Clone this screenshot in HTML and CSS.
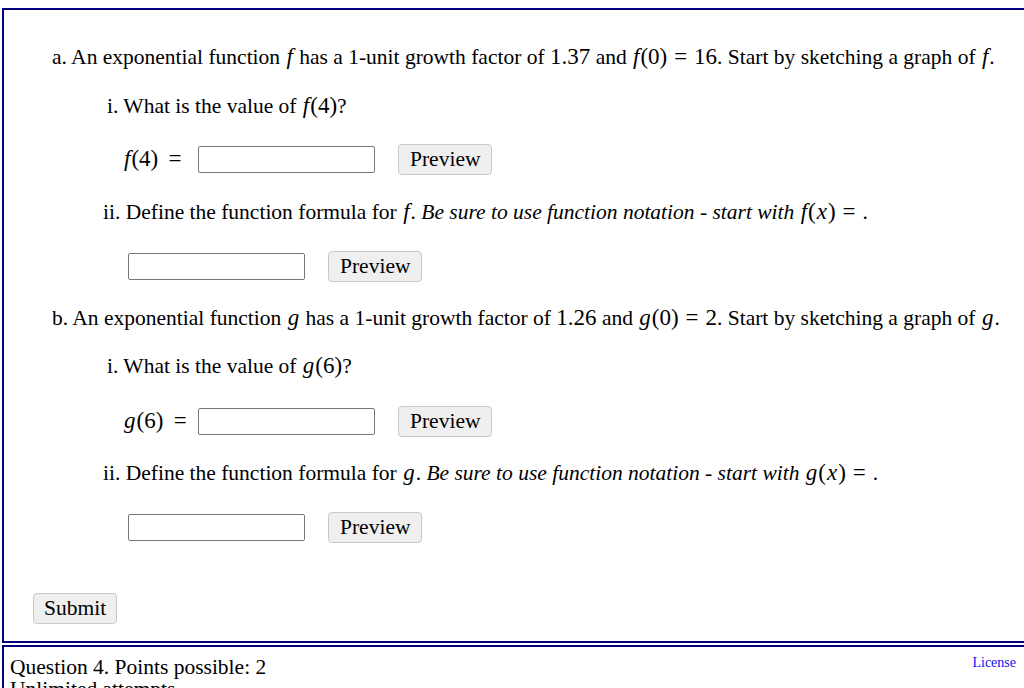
FILE: index.html
```html
<!DOCTYPE html>
<html lang="en">
<head>
    <meta charset="UTF-8">
    <title>Question 3</title>
    <link rel="stylesheet" href="styles.css">
</head>
<body>

<div class="question">
    <div class="part">
        <p class="lead">a. An exponential function <span class="mv">f</span> has a 1-unit growth factor of <span class="mn">1.37</span> and <span class="mv">f</span><span class="mn">(0)</span><span class="eq">=</span><span class="mn">16</span>. Start by sketching a graph of <span class="mv">f</span>.</p>

        <p class="sub">i. What is the value of <span class="mv">f</span><span class="mn">(4)</span>?</p>
        <div class="answer-row labeled">
            <span class="math-label"><span class="mv">f</span><span class="mn">(4)</span><span class="eq">=</span></span>
            <input type="text" class="answer">
            <button type="button" class="btn">Preview</button>
        </div>

        <p class="sub sub-ii">ii. Define the function formula for <span class="mv">f</span>. <em>Be sure to use function notation - start with</em> <span class="mv">f</span><span class="mn">(</span><span class="mv">x</span><span class="mn">)</span><span class="eq">=</span>.</p>
        <div class="answer-row">
            <input type="text" class="answer">
            <button type="button" class="btn">Preview</button>
        </div>
    </div>

    <div class="part part-b">
        <p class="lead">b. An exponential function <span class="mv">g</span> has a 1-unit growth factor of <span class="mn">1.26</span> and <span class="mv">g</span><span class="mn">(0)</span><span class="eq">=</span><span class="mn">2</span>. Start by sketching a graph of <span class="mv">g</span>.</p>

        <p class="sub">i. What is the value of <span class="mv">g</span><span class="mn">(6)</span>?</p>
        <div class="answer-row labeled">
            <span class="math-label"><span class="mv">g</span><span class="mn">(6)</span><span class="eq">=</span></span>
            <input type="text" class="answer">
            <button type="button" class="btn">Preview</button>
        </div>

        <p class="sub sub-ii">ii. Define the function formula for <span class="mv">g</span>. <em>Be sure to use function notation - start with</em> <span class="mv">g</span><span class="mn">(</span><span class="mv">x</span><span class="mn">)</span><span class="eq">=</span>.</p>
        <div class="answer-row">
            <input type="text" class="answer">
            <button type="button" class="btn">Preview</button>
        </div>
    </div>

    <button type="button" class="btn submit">Submit</button>
</div>

<div class="question next">
    <div class="info">
        <p>Question 4. Points possible: 2<br>Unlimited attempts.</p>
        <a href="#" class="license">License</a>
    </div>
</div>

</body>
</html>
```

FILE: styles.css
```css
body {
    margin: 0;
    font-family: "Liberation Serif", "Times New Roman", serif;
    font-size: 21.5px;
    color: #000;
    background: #fff;
    overflow: hidden;
}

p {
    margin: 0;
}

.question {
    width: 1100px;
    margin: 8px 0 0 2px;
    border: 2px solid #000080;
    padding: 35px 0 17px 29px;
}

.part {
    padding-left: 19px;
}

.lead {
    height: 24px;
    line-height: 24px;
    white-space: nowrap;
}

.sub {
    height: 24px;
    line-height: 24px;
    margin: 25px 0 0 55px;
    white-space: nowrap;
}

.sub-ii {
    margin-left: 51px;
}

.part-b .sub {
    margin-top: 24px;
}

/* math bits, a bit wider than the text face like the rendered TeX */
.mv,
.mn,
.eq {
    font-size: 23px;
    line-height: 1;
}

.mv {
    font-style: italic;
    padding: 0 1px;
}

.eq {
    margin: 0 0.3em;
}

.answer-row {
    display: flex;
    align-items: center;
    height: 31px;
    margin: 27px 0 24px 76px;
}

.answer-row.labeled {
    margin: 26px 0 24px 71px;
}

.part-b .answer-row.labeled {
    margin-top: 28px;
}

.math-label {
    width: 75px;
    white-space: nowrap;
}

.math-label .eq {
    margin-left: 0.45em;
}

.answer {
    width: 177px;
    height: 27px;
    box-sizing: border-box;
    border: 1px solid #767676;
    border-radius: 2px;
    margin: 0 23px 0 0;
    padding: 0 4px;
    font: inherit;
}

.btn {
    font-family: "Liberation Serif", "Times New Roman", serif;
    font-size: 21.5px;
    height: 31px;
    padding: 0 11px;
    background: #efefef;
    border: 1px solid #c8c8c8;
    border-radius: 4px;
    color: #000;
}

.part + .part {
    margin-top: 4px;
}

.submit {
    display: block;
    margin-top: 50px;
    padding: 0 10px;
}

.next {
    margin-top: 2px;
    padding: 9px 0 0 6px;
    height: 60px;
}

.info {
    display: flex;
    justify-content: space-between;
    width: 1006px;
}

.info p {
    line-height: 22px;
}

.license {
    font-size: 14px;
    color: #1111ee;
    text-decoration: none;
    margin-top: -1px;
}
```
